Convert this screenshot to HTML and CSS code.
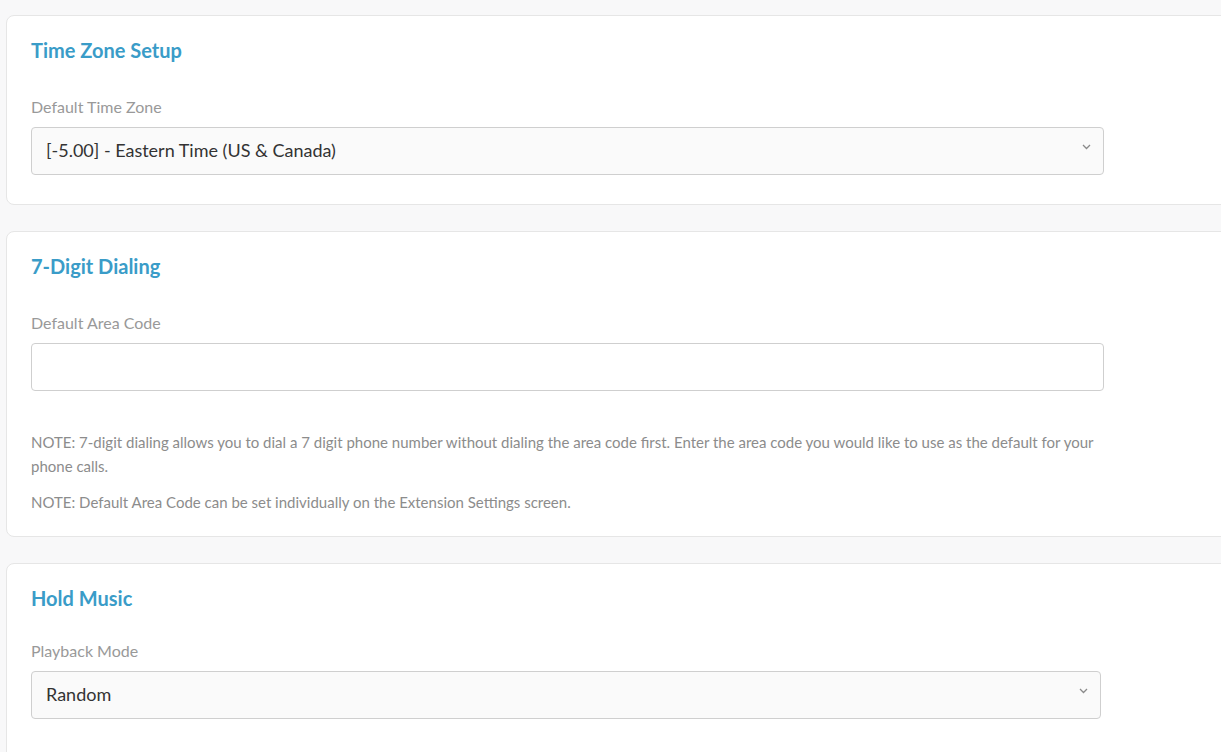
FILE: index.html
```html
<!DOCTYPE html>
<html>
<head>
<meta charset="utf-8">
<link rel="stylesheet" href="styles.css">
</head>
<body>
<div class="page">
  <section class="card card-tz">
    <h2 class="card-title">Time Zone Setup</h2>
    <div class="label">Default Time Zone</div>
    <div class="select w-a">
      <span>[-5.00] - Eastern Time (US &amp; Canada)</span>
      <svg class="chev" width="9" height="6" viewBox="0 0 9 6"><path d="M1 1l3.5 3.5L8 1" fill="none" stroke="#8a8a8a" stroke-width="1.3"/></svg>
    </div>
  </section>
  <section class="card card-notes">
    <h2 class="card-title">7-Digit Dialing</h2>
    <div class="label">Default Area Code</div>
    <div class="input w-a"></div>
    <p class="note first">NOTE: 7-digit dialing allows you to dial a 7 digit phone number without dialing the area code first. Enter the area code you would like to use as the default for your phone calls.</p>
    <p class="note">NOTE: Default Area Code can be set individually on the Extension Settings screen.</p>
  </section>
  <section class="card card-music">
    <h2 class="card-title">Hold Music</h2>
    <div class="label">Playback Mode</div>
    <div class="select w-b">
      <span>Random</span>
      <svg class="chev" width="9" height="6" viewBox="0 0 9 6"><path d="M1 1l3.5 3.5L8 1" fill="none" stroke="#8a8a8a" stroke-width="1.3"/></svg>
    </div>
  </section>
</div>
</body>
</html>
```
FILE: styles.css
```css
html, body { margin: 0; padding: 0; }
body {
  background: #f8f8f9;
  font-family: Lato, "Open Sans", sans-serif;
  overflow: hidden;
  height: 752px;
}
.page {
  padding: 15px 0 0 6px;
  width: 1260px;
  display: flex;
  flex-direction: column;
  gap: 26px;
}
.card {
  background: #fff;
  border: 1px solid #e6e6e6;
  border-radius: 8px;
  padding: 22px 24px 30px 24px;
}
.card-tz { padding-bottom: 29px; }
.card-title {
  margin: 0;
  font-size: 20px;
  line-height: 24px;
  font-weight: 700;
  color: #3a9cc8;
}
.label {
  margin-top: 35px;
  font-size: 16px;
  line-height: 20px;
  color: #999;
}
.card-music { padding-bottom: 60px; }
.card-music .label { margin-top: 31px; }
.select, .input {
  margin-top: 10px;
  height: 46px;
  border: 1px solid #cfcfcf;
  border-radius: 4px;
  display: flex;
  align-items: center;
  justify-content: space-between;
  padding: 0 12px 0 14px;
}
.select { background: #fafafa; height: 44px; padding-bottom: 2px; }
.input { background: #fff; }
.w-a { width: 1045px; }
.w-b { width: 1042px; }
.select span {
  font-size: 18px;
  color: #333;
}
.chev { margin-top: -6px; }
.note {
  margin: 12px 0 0;
  font-size: 15px;
  line-height: 24px;
  color: #8c8c8c;
  width: 1072px;
}
.note.first { margin-top: 39px; }
.card-notes { padding-bottom: 22px; }
```
